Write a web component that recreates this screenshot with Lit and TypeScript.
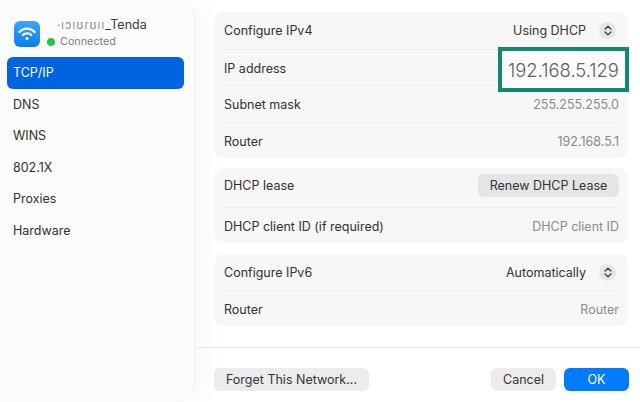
import { css, html, LitElement } from 'lit';
import { customElement } from 'lit/decorators.js';

const TABS = ['TCP/IP', 'DNS', 'WINS', '802.1X', 'Proxies', 'Hardware'];

const stepper = html`<span class="stepper">
  <svg width="8" height="11" viewBox="0 0 8 11" fill="none" stroke="#3a3a3a" stroke-width="1.2" stroke-linecap="round" stroke-linejoin="round">
    <path d="M1 4 L4 1.2 L7 4" /><path d="M1 7 L4 9.8 L7 7" />
  </svg>
</span>`;

@customElement('app-root')
export class AppRoot extends LitElement {
    static override styles = css`
    :host {
      display: block;
      width: 640px;
      height: 402px;
      overflow: hidden;
      background: #fff;
      font-family: Inter, "Liberation Sans", sans-serif;
      font-size: 12.5px;
      color: #303030;
    }
    .window {
      display: flex;
      height: 402px;
    }
    .sidebar {
      flex: none;
      box-sizing: border-box;
      width: 195px;
      height: 402px;
      padding: 14px 10px 0 7px;
      background: #fbfbfb;
      border-radius: 0 16px 16px 0;
      border-right: 1px solid #f1f1f1;
      box-shadow: 14px 0 18px rgba(0, 0, 0, 0.025);
    }
    .network {
      display: flex;
      align-items: center;
      gap: 7px;
      height: 40px;
      padding-left: 7px;
    }
    .wifi-icon {
      flex: none;
      width: 26px;
      height: 26px;
      border-radius: 6px;
      background: linear-gradient(#3aa6fb, #0a7cf0);
      display: flex;
      align-items: center;
      justify-content: center;
    }
    .name {
      font-size: 12.5px;
      line-height: 15px;
      color: #3a3a3a;
      white-space: nowrap;
      margin-top: -2px;
    }
    .scribble {
      margin-left: 10px;
      font-size: 11px;
      color: #8a8a8a;
      letter-spacing: 1.2px;
    }
    .status {
      display: flex;
      align-items: center;
      gap: 5px;
      margin-top: 2px;
      font-size: 10.8px;
      line-height: 14px;
      color: #7c7c7c;
    }
    .dot {
      width: 8px;
      height: 8px;
      border-radius: 50%;
      background: #27c24c;
    }
    .tabs {
      display: flex;
      flex-direction: column;
      margin-top: 3px;
    }
    .tab {
      height: 31.5px;
      display: flex;
      align-items: center;
      padding-left: 6px;
      border-radius: 6px;
    }
    .tab.active {
      background: #0064e0;
      color: #fff;
    }
    .main {
      flex: 1;
      display: flex;
      flex-direction: column;
      position: relative;
      min-width: 0;
    }
    .cards {
      flex: 1;
      display: flex;
      flex-direction: column;
      gap: 10px;
      padding: 12px 12px 0 19px;
    }
    .card {
      background: #f7f7f7;
      border-radius: 10px;
      padding: 0 9px 0 10px;
    }
    .card.third {
      margin-top: 1px;
    }
    .row {
      box-sizing: border-box;
      display: flex;
      align-items: center;
      justify-content: space-between;
      height: 36.5px;
    }
    .row + .row {
      border-top: 1px solid #ececec;
      padding-top: 2px;
    }
    .row.lease {
      height: 39px;
      padding-bottom: 4px;
    }
    .row.half {
      height: 36px;
    }
    .row.client {
      height: 36px;
    }
    .value {
      color: #8a8a8a;
    }
    .select {
      display: flex;
      align-items: center;
      gap: 13px;
      padding-right: 3px;
      color: #333;
    }
    .stepper {
      width: 17px;
      height: 17px;
      border-radius: 50%;
      background: #e6e6e6;
      display: flex;
      align-items: center;
      justify-content: center;
    }
    .highlight {
      position: absolute;
      left: 303px;
      top: 47px;
      box-sizing: border-box;
      width: 131px;
      height: 45px;
      border: 4px solid #0e8a6d;
      background: #fbfbfb;
      display: flex;
      align-items: center;
      justify-content: center;
      font-size: 18.4px;
      font-weight: 300;
      color: #5f5f5f;
    }
    button {
      font: inherit;
      border: none;
      border-radius: 6px;
      height: 23px;
      background: #ececec;
      color: #333;
      padding: 0;
    }
    .renew {
      width: 141px;
      background: #e5e5e5;
    }
    .footer {
      flex: none;
      height: 55px;
      box-sizing: border-box;
      border-top: 1px solid #e8e8e8;
      display: flex;
      align-items: flex-start;
      padding: 20px 11px 0 19px;
    }
    .forget {
      width: 155px;
    }
    .cancel {
      width: 65px;
      margin-left: auto;
    }
    .ok {
      width: 65px;
      margin-left: 8px;
      background: #007aff;
      color: #fff;
    }
  `;

    override render() {
        return html`<div class="window">
      <aside class="sidebar">
        <div class="network">
          <span class="wifi-icon">
            <svg width="18" height="14" viewBox="0 0 18 14" fill="none" stroke="#fff" stroke-width="2.2" stroke-linecap="round">
              <path d="M1.4 5 C5.5 0.6 12.5 0.6 16.6 5" />
              <path d="M4.8 8 C7 5.8 11 5.8 13.2 8" />
              <circle cx="9" cy="11.4" r="1.5" fill="#fff" stroke="none" />
            </svg>
          </span>
          <div>
            <div class="name"><span class="scribble">·ıɔıʊɾʊıı</span>_Tenda</div>
            <div class="status"><span class="dot"></span>Connected</div>
          </div>
        </div>
        <nav class="tabs">
          ${TABS.map((t, i) => html`<div class="tab ${i === 0 ? 'active' : ''}">${t}</div>`)}
        </nav>
      </aside>
      <main class="main">
        <div class="cards">
          <section class="card">
            <div class="row"><span>Configure IPv4</span><span class="select">Using DHCP ${stepper}</span></div>
            <div class="row"><span>IP address</span></div>
            <div class="row"><span>Subnet mask</span><span class="value">255.255.255.0</span></div>
            <div class="row"><span>Router</span><span class="value">192.168.5.1</span></div>
          </section>
          <section class="card">
            <div class="row lease"><span>DHCP lease</span><button class="renew">Renew DHCP Lease</button></div>
            <div class="row client"><span>DHCP client ID (if required)</span><span class="value">DHCP client ID</span></div>
          </section>
          <section class="card third">
            <div class="row half"><span>Configure IPv6</span><span class="select">Automatically ${stepper}</span></div>
            <div class="row half"><span>Router</span><span class="value">Router</span></div>
          </section>
        </div>
        <footer class="footer">
          <button class="forget">Forget This Network...</button>
          <button class="cancel">Cancel</button>
          <button class="ok">OK</button>
        </footer>
        <div class="highlight">192.168.5.129</div>
      </main>
    </div>`;
    }
}
